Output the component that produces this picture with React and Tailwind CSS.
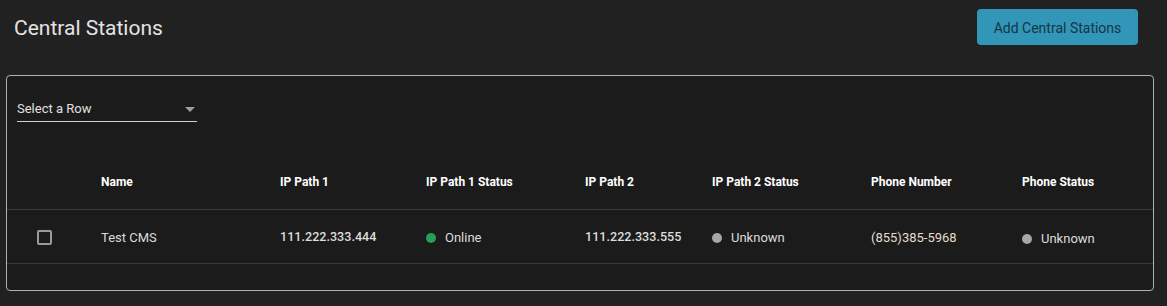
const columns = [
  { label: "Name", w: "w-[179px]" },
  { label: "IP Path 1", w: "w-[146px]" },
  { label: "IP Path 1 Status", w: "w-[159px]" },
  { label: "IP Path 2", w: "w-[127px]" },
  { label: "IP Path 2 Status", w: "w-[159px]" },
  { label: "Phone Number", w: "w-[151px]" },
  { label: "Phone Status", w: "flex-1" },
];

function Status({ color, label }) {
  return (
    <div className="flex items-center gap-[9px]">
      <span className={`w-[10px] h-[10px] rounded-full ${color}`} />
      <span>{label}</span>
    </div>
  );
}

export default function App() {
  return (
    <div
      className="w-[1167px] h-[306px] bg-[#212121] text-[#e0e0e0] overflow-hidden"
      style={{ fontFamily: "Roboto, 'Liberation Sans', sans-serif" }}
    >
      <div className="flex items-start justify-between pl-[14px] pr-[29px] pt-[9px]">
        <h1 className="text-[21px] leading-[36px] text-[#e4e4e4] mt-[1px]">Central Stations</h1>
        <button className="w-[161px] h-[36px] pt-[2px] rounded bg-[#3196b8] text-[#173545] text-[14px]">
          Add Central Stations
        </button>
      </div>

      <div className="mx-[6px] mt-[29px] w-[1148px] h-[216px] border border-[#b0b0b0] rounded-[4px] bg-[#1b1b1b]">
        <div className="pl-[10px] pt-[21px]">
          <div className="w-[180px] h-[25px] border-b border-[#d0d0d0] flex items-center justify-between pr-[2px]">
            <span className="text-[13px] text-[#e0e0e0]">Select a Row</span>
            <svg width="10" height="5" viewBox="0 0 10 5" className="mt-[1px]">
              <path d="M0 0 L10 0 L5 5 Z" fill="#9e9e9e" />
            </svg>
          </div>
        </div>

        <div className="mt-[33px] h-[55px] flex items-center border-b border-[#3a3a3a] text-[12px] font-bold text-white">
          <div className="w-[94px]" />
          {columns.map((c) => (
            <div key={c.label} className={c.w}>
              {c.label}
            </div>
          ))}
        </div>

        <div className="h-[54px] pt-[2px] flex items-center border-b border-[#3a3a3a] text-[13px] text-[#dcdcdc]">
          <div className="w-[94px] pl-[30px]">
            <div className="w-[15px] h-[15px] border-2 border-[#9a9a9a] rounded-[2px]" />
          </div>
          <div className="w-[179px]">Test CMS</div>
          <div className="w-[146px] font-medium text-[12.6px]">111.222.333.444</div>
          <div className="w-[159px]">
            <Status color="bg-[#23a157]" label="Online" />
          </div>
          <div className="w-[127px] font-medium text-[12.6px]">111.222.333.555</div>
          <div className="w-[159px]">
            <Status color="bg-[#a6a6a6]" label="Unknown" />
          </div>
          <div className="w-[151px] text-[#e6dccb]">(855)385-5968</div>
          <div className="flex-1 mt-[2px]">
            <Status color="bg-[#a6a6a6]" label="Unknown" />
          </div>
        </div>
      </div>
    </div>
  );
}
